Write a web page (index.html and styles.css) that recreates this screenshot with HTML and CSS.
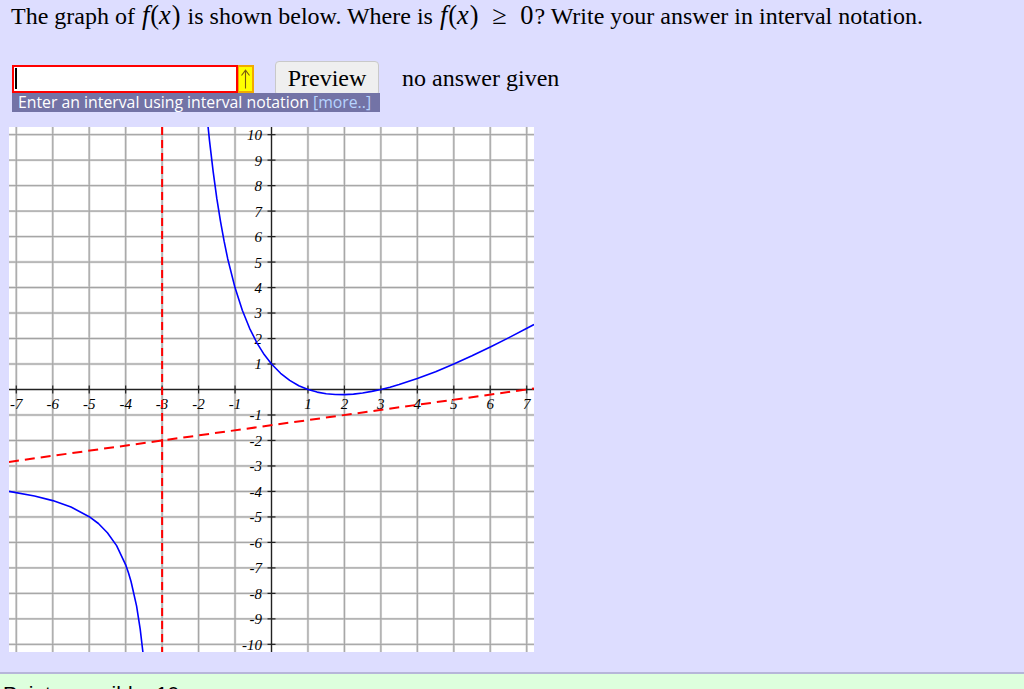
FILE: index.html
```html
<!DOCTYPE html>
<html>
<head>
<meta charset="utf-8">
<title>Problem</title>
<link rel="stylesheet" href="styles.css">
</head>
<body>
<div class="problem">
  <p class="question">The graph of <span class="m"><i>f</i>(<i>x</i>)</span> is shown below. Where is <span class="m"><i>f</i>(<i>x</i>) <span class="rel">≥</span> 0</span>? Write your answer in interval notation.</p>
  <div class="answer-row">
    <div class="field">
      <div class="input"><span class="caret"></span></div>
      <div class="arrow"><svg class="arrow-icon" width="13" height="24" viewBox="0 0 13 24" xmlns="http://www.w3.org/2000/svg"><path d="M6.5 21.5 V3.5 M2.5 8.5 L6.5 3.2 L10.5 8.5" fill="none" stroke="#7a5a10" stroke-width="1.1"/></svg></div>
      <div class="tip">Enter an interval using interval notation <span class="more">[more..]</span></div>
    </div>
    <button class="preview">Preview</button>
    <span class="result">no answer given</span>
  </div>
  <svg class="graph" width="525" height="525" viewBox="0 0 525 525" xmlns="http://www.w3.org/2000/svg">
    <rect x="0" y="0" width="525" height="525" fill="#ffffff"/>
    <g class="grid-soft" stroke="#d6d6d6" stroke-width="2.4">
      <line x1="7.29" y1="0" x2="7.29" y2="525"/><line x1="43.75" y1="0" x2="43.75" y2="525"/><line x1="80.21" y1="0" x2="80.21" y2="525"/><line x1="116.67" y1="0" x2="116.67" y2="525"/><line x1="153.12" y1="0" x2="153.12" y2="525"/><line x1="189.58" y1="0" x2="189.58" y2="525"/><line x1="226.04" y1="0" x2="226.04" y2="525"/><line x1="298.96" y1="0" x2="298.96" y2="525"/><line x1="335.42" y1="0" x2="335.42" y2="525"/><line x1="371.87" y1="0" x2="371.87" y2="525"/><line x1="408.33" y1="0" x2="408.33" y2="525"/><line x1="444.79" y1="0" x2="444.79" y2="525"/><line x1="481.25" y1="0" x2="481.25" y2="525"/><line x1="517.71" y1="0" x2="517.71" y2="525"/>
      <line x1="0" y1="7.65" x2="525" y2="7.65"/><line x1="0" y1="33.13" x2="525" y2="33.13"/><line x1="0" y1="58.62" x2="525" y2="58.62"/><line x1="0" y1="84.10" x2="525" y2="84.10"/><line x1="0" y1="109.59" x2="525" y2="109.59"/><line x1="0" y1="135.07" x2="525" y2="135.07"/><line x1="0" y1="160.56" x2="525" y2="160.56"/><line x1="0" y1="186.04" x2="525" y2="186.04"/><line x1="0" y1="211.53" x2="525" y2="211.53"/><line x1="0" y1="237.01" x2="525" y2="237.01"/><line x1="0" y1="287.99" x2="525" y2="287.99"/><line x1="0" y1="313.47" x2="525" y2="313.47"/><line x1="0" y1="338.96" x2="525" y2="338.96"/><line x1="0" y1="364.44" x2="525" y2="364.44"/><line x1="0" y1="389.93" x2="525" y2="389.93"/><line x1="0" y1="415.41" x2="525" y2="415.41"/><line x1="0" y1="440.90" x2="525" y2="440.90"/><line x1="0" y1="466.38" x2="525" y2="466.38"/><line x1="0" y1="491.87" x2="525" y2="491.87"/><line x1="0" y1="517.35" x2="525" y2="517.35"/>
    </g>
    <g class="grid" stroke="#a2a2a2" stroke-width="1">
      <line x1="7.29" y1="0" x2="7.29" y2="525"/><line x1="43.75" y1="0" x2="43.75" y2="525"/><line x1="80.21" y1="0" x2="80.21" y2="525"/><line x1="116.67" y1="0" x2="116.67" y2="525"/><line x1="153.12" y1="0" x2="153.12" y2="525"/><line x1="189.58" y1="0" x2="189.58" y2="525"/><line x1="226.04" y1="0" x2="226.04" y2="525"/><line x1="298.96" y1="0" x2="298.96" y2="525"/><line x1="335.42" y1="0" x2="335.42" y2="525"/><line x1="371.87" y1="0" x2="371.87" y2="525"/><line x1="408.33" y1="0" x2="408.33" y2="525"/><line x1="444.79" y1="0" x2="444.79" y2="525"/><line x1="481.25" y1="0" x2="481.25" y2="525"/><line x1="517.71" y1="0" x2="517.71" y2="525"/>
      <line x1="0" y1="7.65" x2="525" y2="7.65"/><line x1="0" y1="33.13" x2="525" y2="33.13"/><line x1="0" y1="58.62" x2="525" y2="58.62"/><line x1="0" y1="84.10" x2="525" y2="84.10"/><line x1="0" y1="109.59" x2="525" y2="109.59"/><line x1="0" y1="135.07" x2="525" y2="135.07"/><line x1="0" y1="160.56" x2="525" y2="160.56"/><line x1="0" y1="186.04" x2="525" y2="186.04"/><line x1="0" y1="211.53" x2="525" y2="211.53"/><line x1="0" y1="237.01" x2="525" y2="237.01"/><line x1="0" y1="287.99" x2="525" y2="287.99"/><line x1="0" y1="313.47" x2="525" y2="313.47"/><line x1="0" y1="338.96" x2="525" y2="338.96"/><line x1="0" y1="364.44" x2="525" y2="364.44"/><line x1="0" y1="389.93" x2="525" y2="389.93"/><line x1="0" y1="415.41" x2="525" y2="415.41"/><line x1="0" y1="440.90" x2="525" y2="440.90"/><line x1="0" y1="466.38" x2="525" y2="466.38"/><line x1="0" y1="491.87" x2="525" y2="491.87"/><line x1="0" y1="517.35" x2="525" y2="517.35"/>
    </g>
    <g class="axes" stroke="#222" stroke-width="1.4">
      <line x1="262.5" y1="0" x2="262.5" y2="525"/>
      <line x1="0" y1="262.5" x2="525" y2="262.5"/>
    </g>
    <g class="ticks" stroke="#222" stroke-width="1.2">
      <line x1="7.29" y1="258.5" x2="7.29" y2="266.5"/><line x1="43.75" y1="258.5" x2="43.75" y2="266.5"/><line x1="80.21" y1="258.5" x2="80.21" y2="266.5"/><line x1="116.67" y1="258.5" x2="116.67" y2="266.5"/><line x1="153.12" y1="258.5" x2="153.12" y2="266.5"/><line x1="189.58" y1="258.5" x2="189.58" y2="266.5"/><line x1="226.04" y1="258.5" x2="226.04" y2="266.5"/><line x1="298.96" y1="258.5" x2="298.96" y2="266.5"/><line x1="335.42" y1="258.5" x2="335.42" y2="266.5"/><line x1="371.87" y1="258.5" x2="371.87" y2="266.5"/><line x1="408.33" y1="258.5" x2="408.33" y2="266.5"/><line x1="444.79" y1="258.5" x2="444.79" y2="266.5"/><line x1="481.25" y1="258.5" x2="481.25" y2="266.5"/><line x1="517.71" y1="258.5" x2="517.71" y2="266.5"/>
      <line x1="258.5" y1="7.65" x2="266.5" y2="7.65"/><line x1="258.5" y1="33.13" x2="266.5" y2="33.13"/><line x1="258.5" y1="58.62" x2="266.5" y2="58.62"/><line x1="258.5" y1="84.10" x2="266.5" y2="84.10"/><line x1="258.5" y1="109.59" x2="266.5" y2="109.59"/><line x1="258.5" y1="135.07" x2="266.5" y2="135.07"/><line x1="258.5" y1="160.56" x2="266.5" y2="160.56"/><line x1="258.5" y1="186.04" x2="266.5" y2="186.04"/><line x1="258.5" y1="211.53" x2="266.5" y2="211.53"/><line x1="258.5" y1="237.01" x2="266.5" y2="237.01"/><line x1="258.5" y1="287.99" x2="266.5" y2="287.99"/><line x1="258.5" y1="313.47" x2="266.5" y2="313.47"/><line x1="258.5" y1="338.96" x2="266.5" y2="338.96"/><line x1="258.5" y1="364.44" x2="266.5" y2="364.44"/><line x1="258.5" y1="389.93" x2="266.5" y2="389.93"/><line x1="258.5" y1="415.41" x2="266.5" y2="415.41"/><line x1="258.5" y1="440.90" x2="266.5" y2="440.90"/><line x1="258.5" y1="466.38" x2="266.5" y2="466.38"/><line x1="258.5" y1="491.87" x2="266.5" y2="491.87"/><line x1="258.5" y1="517.35" x2="266.5" y2="517.35"/>
    </g>
    <g class="xlabels" text-anchor="middle">
      <text x="7.29" y="281.5">-7</text><text x="43.75" y="281.5">-6</text><text x="80.21" y="281.5">-5</text><text x="116.67" y="281.5">-4</text><text x="153.12" y="281.5">-3</text><text x="189.58" y="281.5">-2</text><text x="226.04" y="281.5">-1</text><text x="298.96" y="281.5">1</text><text x="335.42" y="281.5">2</text><text x="371.87" y="281.5">3</text><text x="408.33" y="281.5">4</text><text x="444.79" y="281.5">5</text><text x="481.25" y="281.5">6</text><text x="517.71" y="281.5">7</text>
    </g>
    <g class="ylabels" text-anchor="end">
      <text x="253" y="13">10</text><text x="253" y="38.5">9</text><text x="253" y="64">8</text><text x="253" y="89.5">7</text><text x="253" y="115">6</text><text x="253" y="140.5">5</text><text x="253" y="166">4</text><text x="253" y="191.4">3</text><text x="253" y="216.9">2</text><text x="253" y="242.4">1</text><text x="253" y="293.4">-1</text><text x="253" y="318.9">-2</text><text x="253" y="344.4">-3</text><text x="253" y="369.8">-4</text><text x="253" y="395.3">-5</text><text x="253" y="420.8">-6</text><text x="253" y="446.3">-7</text><text x="253" y="471.8">-8</text><text x="253" y="497.3">-9</text><text x="253" y="522.8">-10</text>
    </g>
    <line class="asym" x1="153.12" y1="0" x2="153.12" y2="525" stroke="#ff0000" stroke-width="2" stroke-dasharray="8 5"/>
    <line class="asym" x1="0" y1="334.9" x2="525" y2="261.5" stroke="#ff0000" stroke-width="2" stroke-dasharray="10 6"/>
    <polyline class="curve" fill="none" stroke="#0000ff" stroke-width="1.6" stroke-linejoin="round" points="199.1,0 200.5,13.7 204.2,44.8 207.8,71.4 211.5,94.3 215.1,114.2 218.7,131.7 226.0,160.6 233.3,183.3 240.6,201.3 247.9,215.8 255.2,227.6 262.5,237.0 271.6,246.3 280.7,253.4 289.8,258.7 299.0,262.5 308.1,265.1 317.2,266.7 326.3,267.5 335.4,267.6 344.5,267.1 353.6,266.0 362.7,264.4 371.9,262.5 381.0,260.2 390.1,257.6 408.3,251.6 426.6,244.7 444.8,237.0 463.0,228.8 481.3,220.0 499.5,210.9 525,197.5"/>
    <polyline class="curve" fill="none" stroke="#0000ff" stroke-width="1.6" stroke-linejoin="round" points="0,364.4 25.5,369.0 43.75,373.6 62.0,380.0 80.2,389.7 89.4,396.5 98.4,405.7 107.6,418.6 116.7,437.8 119.6,446.2 122.1,454.8 127.6,479.1 131.2,502.1 133.9,525"/>
  </svg>
</div>
<div class="footer">Points possible: 10</div>
</body>
</html>
```

FILE: styles.css
```css
html, body {
  margin: 0;
  padding: 0;
}

body {
  background: #ddddff;
  font-family: "Liberation Serif", "Times New Roman", serif;
  color: #000;
}

.problem {
  padding: 1px 0 20px 9px;
}

.question {
  margin: 0 0 0 2px;
  font-size: 24px;
  line-height: 28px;
}

.m {
  font-family: "Liberation Serif", serif;
  font-size: 1.1em;
  padding: 0 1px;
}

.m i {
  font-style: italic;
  padding-right: 1px;
}

.rel {
  padding: 0 7px;
}

.answer-row {
  display: flex;
  align-items: center;
  height: 35px;
  margin-top: 31px;
  padding-left: 3px;
}

.field {
  position: relative;
  display: flex;
}

.input {
  width: 222px;
  height: 24px;
  border: 2px solid #ff0000;
  background: #ffffff;
  display: flex;
  align-items: center;
}

.caret {
  display: block;
  width: 2px;
  height: 21px;
  margin-left: 1px;
  background: #000;
}

.arrow {
  width: 13px;
  height: 24px;
  border: 2px solid #f2a900;
  border-left-width: 1px;
  background: #ffff00;
}

.arrow-icon {
  display: block;
}

.tip {
  position: absolute;
  left: 0;
  top: 28px;
  width: 362px;
  height: 19px;
  padding-left: 6px;
  background: #7373a6;
  color: #ffffff;
  font-family: "Open Sans", "Noto Sans", sans-serif;
  font-size: 15.8px;
  line-height: 18px;
  white-space: nowrap;
  z-index: 2;
}

.more {
  color: #b7d4ff;
}

.preview {
  margin-left: 21px;
  width: 104px;
  height: 35px;
  padding: 0;
  border: 1px solid #c9c9c9;
  border-radius: 4px;
  background: #efefef;
  font-family: "Liberation Serif", serif;
  font-size: 24px;
  color: #000;
}

.result {
  margin-left: 23px;
  font-size: 24px;
}

.graph {
  display: block;
  margin-top: 31px;
}

.graph text {
  font-family: "Liberation Serif", serif;
  font-style: italic;
  font-size: 15px;
  fill: #000;
}

.footer {
  border-top: 2px solid #b6b6d9;
  background: #ddffdd;
  padding: 8px 0 20px 3px;
  font-family: "Liberation Sans", Arial, sans-serif;
  font-size: 21px;
  line-height: 24px;
}
```
